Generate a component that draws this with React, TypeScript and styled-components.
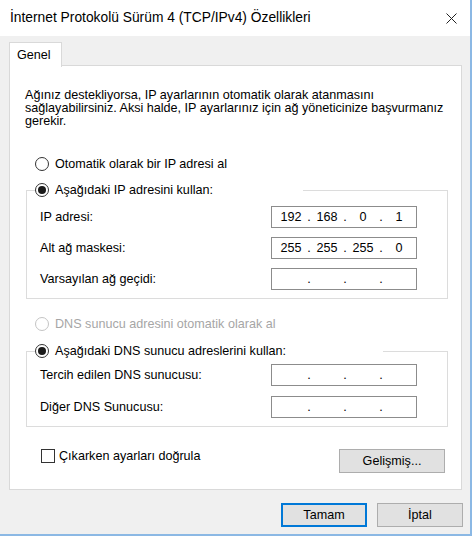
import React from "react";
import styled, { createGlobalStyle } from "styled-components";

const Global = createGlobalStyle`
  html, body { margin: 0; padding: 0; background: #ffffff; }
  body { font-family: "Liberation Sans", Arial, sans-serif; font-size: 12.6px; color: #000; }
  * { box-sizing: border-box; }
`;

const Window = styled.div`
  width: 472px;
  height: 536px;
  display: flex;
  flex-direction: column;
  background: #f0f0f0;
  border-right: 2px solid #8bb8e4;
  border-bottom: 2px solid #8bb8e4;
`;

const TitleBar = styled.div`
  height: 36px;
  flex: none;
  background: #ffffff;
  display: flex;
  align-items: center;
  justify-content: space-between;
  padding: 0 12px 0 10px;
`;

const Title = styled.span`
  font-size: 13.8px;
  color: #000;
  padding-bottom: 1px;
`;

const CloseButton = styled.span`
  width: 14px;
  height: 14px;
  display: flex;
  align-items: center;
  justify-content: center;
`;

const Body = styled.div`
  flex: 1;
  display: flex;
  flex-direction: column;
  padding: 6px 8px 0 9px;
`;

const TabStrip = styled.div`
  display: flex;
  height: 24px;
  flex: none;
  position: relative;
  z-index: 1;
  margin-bottom: -1px;
`;

const Tab = styled.div`
  width: 53px;
  height: 25px;
  background: #ffffff;
  border: 1px solid #d9d9d9;
  border-bottom: none;
  padding: 5px 0 0 7px;
`;

const Panel = styled.div`
  background: #ffffff;
  border: 1px solid #d9d9d9;
  height: 425px;
  flex: none;
  padding: 22px 13px 0 16px;
  display: flex;
  flex-direction: column;
`;

const Description = styled.p`
  margin: 1px 0 0 -1px;
  line-height: 12.8px;
`;

const RadioRow = styled.label<{ $top: number; $disabled?: boolean }>`
  display: flex;
  align-items: center;
  height: 16px;
  margin-top: ${(p) => p.$top}px;
  margin-left: 9px;
  gap: 6px;
  color: ${(p) => (p.$disabled ? "#a6a6a6" : "#000")};
  white-space: nowrap;
`;

const Circle = styled.span<{ $checked?: boolean; $disabled?: boolean }>`
  width: 14px;
  height: 14px;
  flex: none;
  border-radius: 50%;
  border: 1px solid ${(p) => (p.$disabled ? "#c4c4c4" : "#333333")};
  background: #fff;
  display: flex;
  align-items: center;
  justify-content: center;
  &::after {
    content: "";
    display: ${(p) => (p.$checked ? "block" : "none")};
    width: 8px;
    height: 8px;
    border-radius: 50%;
    background: #1a1a1a;
  }
`;

const Group = styled.fieldset<{ $top: number }>`
  margin: ${(p) => p.$top}px 0 0 0;
  padding: 0;
  border: 1px solid #dcdcdc;
  min-inline-size: 0;
`;

const Legend = styled.legend<{ $width: number }>`
  padding: 0;
  margin-left: 8px;
  width: ${(p) => p.$width}px;
  height: 16px;
  display: flex;
  align-items: center;
  gap: 6px;
  background: #fff;
  white-space: nowrap;
`;

const GroupRows = styled.div<{ $top: number; $gap: number }>`
  display: grid;
  grid-template-columns: 1fr 146px;
  row-gap: ${(p) => p.$gap}px;
  align-items: center;
  padding: ${(p) => p.$top}px 30px 8px 13px;
`;

const FieldLabel = styled.span`
  white-space: nowrap;
`;

const IpBox = styled.div`
  height: 22px;
  border: 1px solid #8c8c8c;
  background: #fff;
  display: flex;
  align-items: center;
  padding-left: 4px;
`;

const Octet = styled.span`
  width: 30px;
  text-align: center;
`;

const Dot = styled.span`
  width: 6px;
  text-align: center;
`;

const BottomRow = styled.div`
  display: flex;
  justify-content: space-between;
  align-items: flex-start;
  margin-top: 21px;
`;

const CheckRow = styled.label`
  display: flex;
  align-items: center;
  gap: 4px;
  height: 15px;
  margin-left: 15px;
`;

const CheckBox = styled.span`
  width: 14px;
  height: 14px;
  border: 1px solid #333;
  background: #fff;
  flex: none;
`;

const Button = styled.button<{ $width: number; $default?: boolean }>`
  width: ${(p) => p.$width}px;
  height: 24px;
  background: #e1e1e1;
  border: 1px solid ${(p) => (p.$default ? "#0078d7" : "#adadad")};
  box-shadow: ${(p) => (p.$default ? "inset 0 0 0 1px #0078d7" : "none")};
  font-family: "Liberation Sans", Arial, sans-serif;
  font-size: 12.6px;
  color: #000;
  padding: 0;
`;

const AdvancedButton = styled(Button)`
  margin-top: 1px;
  margin-right: 3px;
`;

const Footer = styled.div`
  display: flex;
  justify-content: flex-end;
  gap: 10px;
  padding: 13px 0 0 0;
  margin-right: -1px;
`;

const IpField: React.FC<{ values?: string[] }> = ({ values = ["", "", "", ""] }) => (
  <IpBox>
    {values.map((v, i) => (
      <React.Fragment key={i}>
        <Octet>{v}</Octet>
        {i < 3 && <Dot>.</Dot>}
      </React.Fragment>
    ))}
  </IpBox>
);

export default function App() {
  return (
    <>
      <Global />
      <Window>
        <TitleBar>
          <Title>İnternet Protokolü Sürüm 4 (TCP/IPv4) Özellikleri</Title>
          <CloseButton>
            <svg width="11" height="11" viewBox="0 0 11 11">
              <path d="M0.5 0.5 L10.5 10.5 M10.5 0.5 L0.5 10.5" stroke="#222" strokeWidth="1" />
            </svg>
          </CloseButton>
        </TitleBar>
        <Body>
          <TabStrip>
            <Tab>Genel</Tab>
          </TabStrip>
          <Panel>
            <Description>
              Ağınız destekliyorsa, IP ayarlarının otomatik olarak atanmasını
              <br />
              sağlayabilirsiniz. Aksi halde, IP ayarlarınız için ağ yöneticinize başvurmanız
              <br />
              gerekir.
            </Description>
            <RadioRow $top={29}>
              <Circle />
              Otomatik olarak bir IP adresi al
            </RadioRow>
            <Group $top={10}>
              <Legend $width={268}>
                <Circle $checked />
                Aşağıdaki IP adresini kullan:
              </Legend>
              <GroupRows $top={8} $gap={9}>
                <FieldLabel>IP adresi:</FieldLabel>
                <IpField values={["192", "168", "0", "1"]} />
                <FieldLabel>Alt ağ maskesi:</FieldLabel>
                <IpField values={["255", "255", "255", "0"]} />
                <FieldLabel>Varsayılan ağ geçidi:</FieldLabel>
                <IpField />
              </GroupRows>
            </Group>
            <RadioRow $top={17} $disabled>
              <Circle $disabled />
              DNS sunucu adresini otomatik olarak al
            </RadioRow>
            <Group $top={11}>
              <Legend $width={348}>
                <Circle $checked />
                Aşağıdaki DNS sunucu adreslerini kullan:
              </Legend>
              <GroupRows $top={5} $gap={10}>
                <FieldLabel>Tercih edilen DNS sunucusu:</FieldLabel>
                <IpField />
                <FieldLabel>Diğer DNS Sunucusu:</FieldLabel>
                <IpField />
              </GroupRows>
            </Group>
            <BottomRow>
              <CheckRow>
                <CheckBox />
                Çıkarken ayarları doğrula
              </CheckRow>
              <AdvancedButton $width={106}>Gelişmiş...</AdvancedButton>
            </BottomRow>
          </Panel>
          <Footer>
            <Button $width={86} $default>
              Tamam
            </Button>
            <Button $width={86}>İptal</Button>
          </Footer>
        </Body>
      </Window>
    </>
  );
}
